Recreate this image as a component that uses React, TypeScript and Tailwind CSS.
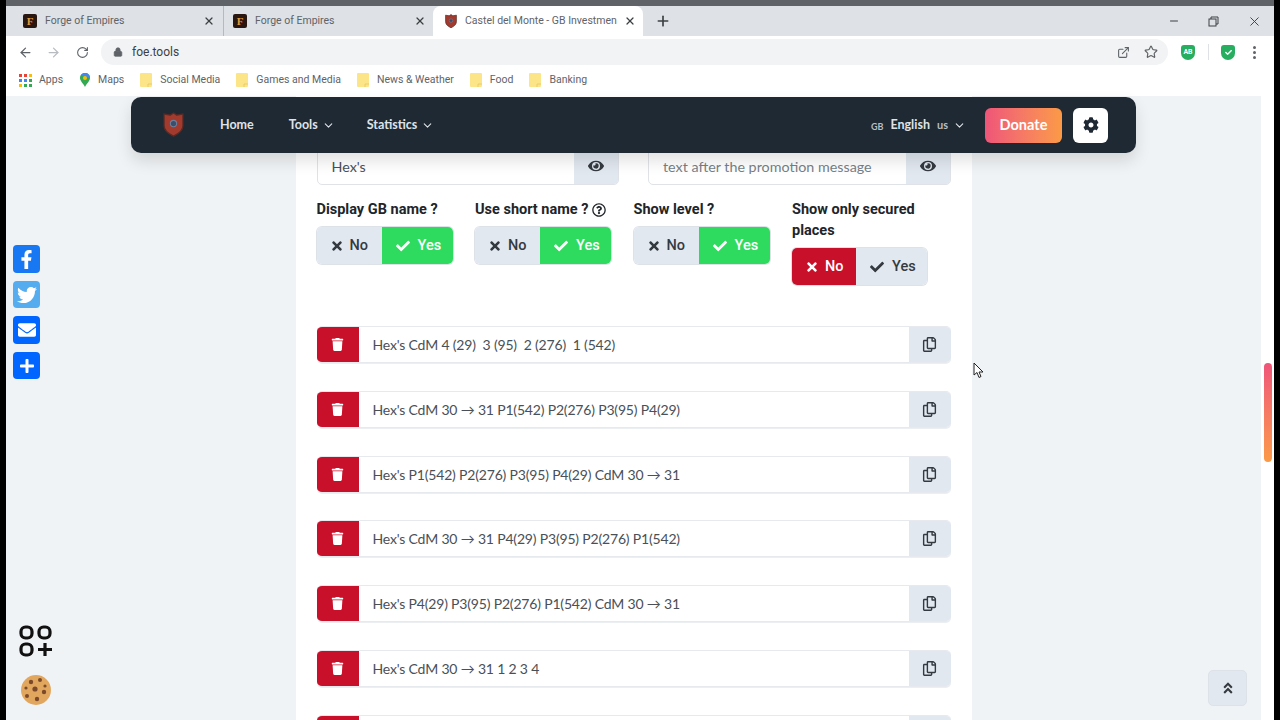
import { ArrowLeft, ArrowRight, RotateCw, Lock, ExternalLink, Star, Plus, Minus, X, ChevronDown } from 'lucide-react';
import { FaEye, FaTimes, FaCheck, FaTrash, FaRegCopy, FaCog, FaAngleDoubleUp, FaRegQuestionCircle, FaFacebookF, FaTwitter, FaEnvelope, FaPlus } from 'react-icons/fa';

const rows = [
  "Hex's CdM 4 (29)  3 (95)  2 (276)  1 (542)",
  "Hex's CdM 30 → 31 P1(542) P2(276) P3(95) P4(29)",
  "Hex's P1(542) P2(276) P3(95) P4(29) CdM 30 → 31",
  "Hex's CdM 30 → 31 P4(29) P3(95) P2(276) P1(542)",
  "Hex's P4(29) P3(95) P2(276) P1(542) CdM 30 → 31",
  "Hex's CdM 30 → 31 1 2 3 4",
  "",
];

const bookmarks = ['Social Media', 'Games and Media', 'News & Weather', 'Food', 'Banking'];

const Shield = ({ size = 14 }: { size?: number }) => (
  <svg width={size} height={size * 1.2} viewBox="0 0 20 24">
    <path d="M10 1 L13 3 L19 2 V13 C19 18 14 21 10 23 C6 21 1 18 1 13 V2 L7 3 Z" fill="#a23a2e" stroke="#5c2a24" strokeWidth="1.2" />
    <circle cx="10" cy="11" r="3" fill="#3c4f6a" stroke="#6d7f9c" strokeWidth="1" />
  </svg>
);

const ForgeIcon = () => (
  <div className="w-[14px] h-[14px] shrink-0 bg-[#2a1712] rounded-[2px] flex items-center justify-center text-[#e29a3a] text-[11px] font-bold leading-none font-['Liberation_Serif',serif]">F</div>
);

const Folder = () => (
  <svg width="12" height="14" viewBox="0 0 12 14" className="shrink-0">
    <path d="M1 0 H11 Q12 0 12 1 V13 Q12 14 11 14 H1 Q0 14 0 13 V1 Q0 0 1 0 Z" fill="#fce588" />
    <path d="M8 14 V11 H12" fill="none" stroke="#e6c860" strokeWidth="0.8" />
  </svg>
);

const Toggle = ({ noActive }: { noActive?: boolean }) => (
  <div className="flex h-[36.5px] w-fit rounded-[5px] overflow-hidden shadow-[0_0_0_1px_#dde2e8] text-[14.5px] font-medium">
    <div className={`flex items-center gap-[6px] pl-[13px] pt-[1px] ${noActive ? 'w-[64px] bg-[#c9102a] text-white' : 'w-[65px] bg-[#e2e8f0] text-[#343a40]'}`}>
      <FaTimes size={14} />
      No
    </div>
    <div className={`flex items-center gap-[8px] pl-[14px] pt-[1px] w-[71px] ${noActive ? 'bg-[#e2e8f0] text-[#343a40]' : 'bg-[#2fdb5f] text-white'}`}>
      <FaCheck size={14} />
      Yes
    </div>
  </div>
);

const TextInput = ({ value, placeholder }: { value?: string; placeholder?: string }) => (
  <div className="flex h-[38px] rounded-[5px] overflow-hidden border border-[#dfe3e8] bg-white">
    <div className={`flex-1 flex items-center pl-[14px] pt-[2px] text-[14.3px] font-['Lato',sans-serif] ${value ? 'text-[#495057]' : 'text-[#777f87]'}`}>{value || placeholder}</div>
    <div className="w-[44px] bg-[#e2e8f0] flex items-center justify-center text-[#343a40]">
      <FaEye size={16} />
    </div>
  </div>
);

const ResultRow = ({ text }: { text: string }) => (
  <div className="flex h-[37px] shrink-0 rounded-[5px] overflow-hidden border-y border-[#e6e9ed] bg-white shadow-[0_1px_0_#eceff2]">
    <div className="w-[42px] bg-[#c9102a] flex items-center justify-center text-white -my-px">
      <FaTrash size={13} />
    </div>
    <div className="flex-1 pl-[14px] flex items-center text-[14px] tracking-[-0.18px] font-['Lato',sans-serif] text-[#495057] whitespace-pre">{text}</div>
    <div className="w-[42px] bg-[#e2e8f0] flex items-center justify-center text-[#343a40]">
      <FaRegCopy size={15} />
    </div>
  </div>
);

const App = () => {
  return (
    <div className="w-[1280px] h-[720px] flex overflow-hidden bg-black font-['Roboto',sans-serif]">
      <div className="w-[6px] shrink-0 bg-black" />
      <div className="relative flex-1 flex flex-col bg-white overflow-hidden">
        {/* browser chrome */}
        <div className="h-[6px] bg-[#5f6368] shrink-0" />
        <div className="h-[30px] shrink-0 bg-[#dee1e6] flex items-center text-[10.5px] text-[#5f6368]">
          <div className="w-[218px] h-full flex items-center pl-[17px] pr-[8px] border-r border-[#9aa0a6]/60">
            <ForgeIcon />
            <span className="ml-[8px] flex-1">Forge of Empires</span>
            <X size={12} strokeWidth={2.5} className="text-[#3c4043]" />
          </div>
          <div className="w-[209px] h-full flex items-center pl-[9px] pr-[7px]">
            <ForgeIcon />
            <span className="ml-[8px] flex-1">Forge of Empires</span>
            <X size={12} strokeWidth={2.5} className="text-[#3c4043]" />
          </div>
          <div className="w-[210px] h-full flex items-center pl-[12px] pr-[7px] bg-white rounded-t-[8px]">
            <Shield size={12} />
            <span className="ml-[8px] flex-1 whitespace-nowrap">Castel del Monte - GB Investmen</span>
            <X size={12} strokeWidth={2.5} className="text-[#3c4043]" />
          </div>
          <Plus size={16} strokeWidth={2.5} className="ml-[12px] text-[#3c4043]" />
          <div className="ml-auto flex items-center gap-[28px] pr-[12px] text-[#3c4043]">
            <Minus size={12} />
            <svg width="11" height="11" viewBox="0 0 11 11" fill="none" stroke="#3c4043">
              <rect x="1" y="3" width="7" height="7" />
              <path d="M3 3V1H10V8H8" />
            </svg>
            <X size={15} strokeWidth={1.5} />
          </div>
        </div>
        <div className="h-[30px] shrink-0 flex items-center pl-[12px] pr-[12px] pt-[2px]">
          <ArrowLeft size={15} className="text-[#5f6368]" />
          <ArrowRight size={15} className="ml-[13px] text-[#b8bcc0]" />
          <RotateCw size={13} className="ml-[15px] text-[#5f6368]" />
          <div className="ml-[12px] w-[1067px] h-[26px] rounded-full bg-[#f1f3f4] flex items-center pl-[12px] pr-[10px]">
            <Lock size={10} className="text-[#5f6368] fill-[#5f6368]" />
            <span className="ml-[9px] text-[12px] text-[#3c4043]">foe.tools</span>
            <ExternalLink size={13} className="ml-auto text-[#5f6368]" />
            <Star size={14} className="ml-[14px] text-[#5f6368]" />
          </div>
          <div className="ml-[13px] w-[14px] h-[15px] rounded-b-[7px] rounded-t-[3px] bg-[#27ae60] text-white text-[7px] font-bold flex items-center justify-center">AB</div>
          <div className="ml-[13px] w-px h-[16px] bg-[#dee1e6]" />
          <div className="ml-[12px] w-[14px] h-[15px] rounded-b-[7px] rounded-t-[3px] bg-[#27ae60] text-white flex items-center justify-center">
            <FaCheck size={7} />
          </div>
          <div className="ml-[18px] flex flex-col gap-[2px]">
            <div className="w-[3px] h-[3px] rounded-full bg-[#5f6368]" />
            <div className="w-[3px] h-[3px] rounded-full bg-[#5f6368]" />
            <div className="w-[3px] h-[3px] rounded-full bg-[#5f6368]" />
          </div>
        </div>
        <div className="h-[28px] shrink-0 flex items-center pl-[13px] gap-[16px] text-[10.5px] text-[#5f6368]">
          <div className="flex items-center gap-[7px]">
            <div className="grid grid-cols-3 gap-[2px]">
              <div className="w-[3px] h-[3px] bg-[#ea4335]" />
              <div className="w-[3px] h-[3px] bg-[#ea4335]" />
              <div className="w-[3px] h-[3px] bg-[#fbbc05]" />
              <div className="w-[3px] h-[3px] bg-[#4285f4]" />
              <div className="w-[3px] h-[3px] bg-[#4285f4]" />
              <div className="w-[3px] h-[3px] bg-[#34a853]" />
              <div className="w-[3px] h-[3px] bg-[#fbbc05]" />
              <div className="w-[3px] h-[3px] bg-[#34a853]" />
              <div className="w-[3px] h-[3px] bg-[#34a853]" />
            </div>
            Apps
          </div>
          <div className="flex items-center gap-[8px] ml-[1px]">
            <svg width="10" height="14" viewBox="0 0 10 14">
              <path d="M5 0 C2 0 0 2 0 5 C0 8 3 10 5 14 C7 10 10 8 10 5 C10 2 8 0 5 0 Z" fill="#34a853" />
              <path d="M5 0 C8 0 10 2 10 5 L1 2 C2 1 3 0 5 0 Z" fill="#4285f4" />
              <circle cx="5" cy="5" r="2" fill="#fbbc05" />
            </svg>
            Maps
          </div>
          {bookmarks.map((b) => (
            <div key={b} className="flex items-center gap-[8px]">
              <Folder />
              {b}
            </div>
          ))}
        </div>
        <div className="h-[2px] shrink-0 bg-white" />

        {/* page */}
        <div className="flex-1 min-h-0 flex bg-[#f0f3f5] overflow-hidden">
          <div className="flex-1 flex justify-center overflow-hidden">
            <div className="w-[676px] bg-white px-[21px] pt-[51px] flex flex-col overflow-hidden">
              <div className="grid grid-cols-2 gap-[29px] shrink-0">
                <TextInput value="Hex's" />
                <TextInput placeholder="text after the promotion message" />
              </div>
              <div className="grid grid-cols-4 mt-[14px] shrink-0">
                <div>
                  <div className="text-[14.5px] font-bold text-[#212529] leading-[21px] mb-[7px]">Display GB name ?</div>
                  <Toggle />
                </div>
                <div>
                  <div className="flex items-center gap-[4px] text-[14.5px] font-bold text-[#212529] leading-[21px] mb-[7px]">
                    Use short name ?
                    <FaRegQuestionCircle size={14} />
                  </div>
                  <Toggle />
                </div>
                <div>
                  <div className="text-[14.5px] font-bold text-[#212529] leading-[21px] mb-[7px]">Show level ?</div>
                  <Toggle />
                </div>
                <div>
                  <div className="text-[14.5px] font-bold text-[#212529] leading-[21px] mb-[7px] pr-[20px]">Show only secured places</div>
                  <Toggle noActive />
                </div>
              </div>
              <div className="mt-[41.5px] flex flex-col gap-[27.8px]">
                {rows.map((r, i) => (
                  <ResultRow key={i} text={r} />
                ))}
              </div>
            </div>
          </div>
          <div className="w-[13px] shrink-0 bg-white pt-[267px] pl-[3px]">
            <div className="w-[8px] h-[99px] rounded-full bg-gradient-to-b from-[#ef5478] to-[#fb9a45]" />
          </div>
        </div>

        {/* sticky navbar */}
        <div className="absolute left-[125px] top-[97px] w-[1005px] h-[56px] rounded-[10px] bg-[#1f2933] flex items-center pl-[32px] pr-[28px] shadow-[0_8px_16px_rgba(0,0,0,0.12)] text-[#dfe3e7] text-[12.5px] font-['Lato',sans-serif] font-bold">
          <Shield size={21} />
          <span className="ml-[36px] mt-[1px]">Home</span>
          <span className="ml-[35px] mt-[1px] flex items-center gap-[4px]">
            Tools
            <ChevronDown size={13} />
          </span>
          <span className="ml-[32px] mt-[1px] flex items-center gap-[4px]">
            Statistics
            <ChevronDown size={13} />
          </span>
          <span className="ml-auto text-[9px] text-[#b8bec4] mt-[3px]">GB</span>
          <span className="ml-[7px] mt-[1px]">English</span>
          <span className="ml-[7px] text-[11px] text-[#b8bec4] mt-[1px]">us</span>
          <ChevronDown size={13} className="ml-[5px]" />
          <div className="ml-[19px] w-[77px] h-[35px] rounded-[6px] bg-gradient-to-r from-[#ef5478] to-[#fb9a45] flex items-center justify-center text-white font-bold text-[14.5px]">Donate</div>
          <div className="ml-[11px] w-[35px] h-[35px] rounded-[6px] bg-white flex items-center justify-center text-[#1f2933]">
            <FaCog size={16} />
          </div>
        </div>

        {/* share buttons */}
        <div className="absolute left-[7px] top-[245px] flex flex-col gap-[8px] text-white">
          <div className="w-[27px] h-[28px] rounded-[4px] bg-[#1877f2] flex items-center justify-center"><FaFacebookF size={19} /></div>
          <div className="w-[27px] h-[27px] rounded-[4px] bg-[#55acee] flex items-center justify-center"><FaTwitter size={20} /></div>
          <div className="w-[27px] h-[28px] rounded-[4px] bg-[#0166ff] flex items-center justify-center"><FaEnvelope size={18} /></div>
          <div className="w-[27px] h-[27px] rounded-[4px] bg-[#0166ff] flex items-center justify-center"><FaPlus size={16} /></div>
        </div>

        {/* widget icons */}
        <div className="absolute left-[13px] top-[625px] flex flex-col items-center gap-[17px]">
          <svg width="34" height="32" viewBox="0 0 34 32" fill="none" stroke="#111" strokeWidth="3.2">
            <rect x="2" y="2" width="11" height="11" rx="4.5" />
            <rect x="20" y="2" width="11" height="11" rx="4.5" />
            <rect x="2" y="19" width="11" height="11" rx="4.5" />
            <path d="M19 24.5H33M26 18V31" />
          </svg>
          <svg width="32" height="32" viewBox="0 0 32 32">
            <circle cx="16" cy="16" r="15" fill="#e2a75e" />
            <circle cx="11" cy="8" r="2.2" fill="#7b4a2b" />
            <circle cx="20" cy="6" r="2" fill="#7b4a2b" />
            <circle cx="25" cy="12" r="1.6" fill="#7b4a2b" />
            <circle cx="6" cy="14" r="1.6" fill="#7b4a2b" />
            <circle cx="15" cy="15" r="2.6" fill="#7b4a2b" />
            <circle cx="24" cy="18" r="2.2" fill="#7b4a2b" />
            <circle cx="7" cy="22" r="2" fill="#7b4a2b" />
            <circle cx="17" cy="25" r="2.2" fill="#7b4a2b" />
          </svg>
        </div>

        {/* back to top */}
        <div className="absolute left-[1202px] top-[670px] w-[39px] h-[36px] rounded-[5px] bg-[#e2e8f0] border border-[#dde2e8] flex items-center justify-center text-[#343a40]">
          <FaAngleDoubleUp size={14} />
        </div>

        {/* mouse cursor */}
        <svg className="absolute left-[967px] top-[362px]" width="11" height="17" viewBox="0 0 11 17">
          <path d="M1 1 V13 L4 10.5 L6 15.5 L8 14.5 L6 10 H10 Z" fill="#fff" stroke="#222" strokeWidth="1" />
        </svg>
      </div>
      <div className="w-[6px] shrink-0 bg-black" />
    </div>
  );
};

export default App;
